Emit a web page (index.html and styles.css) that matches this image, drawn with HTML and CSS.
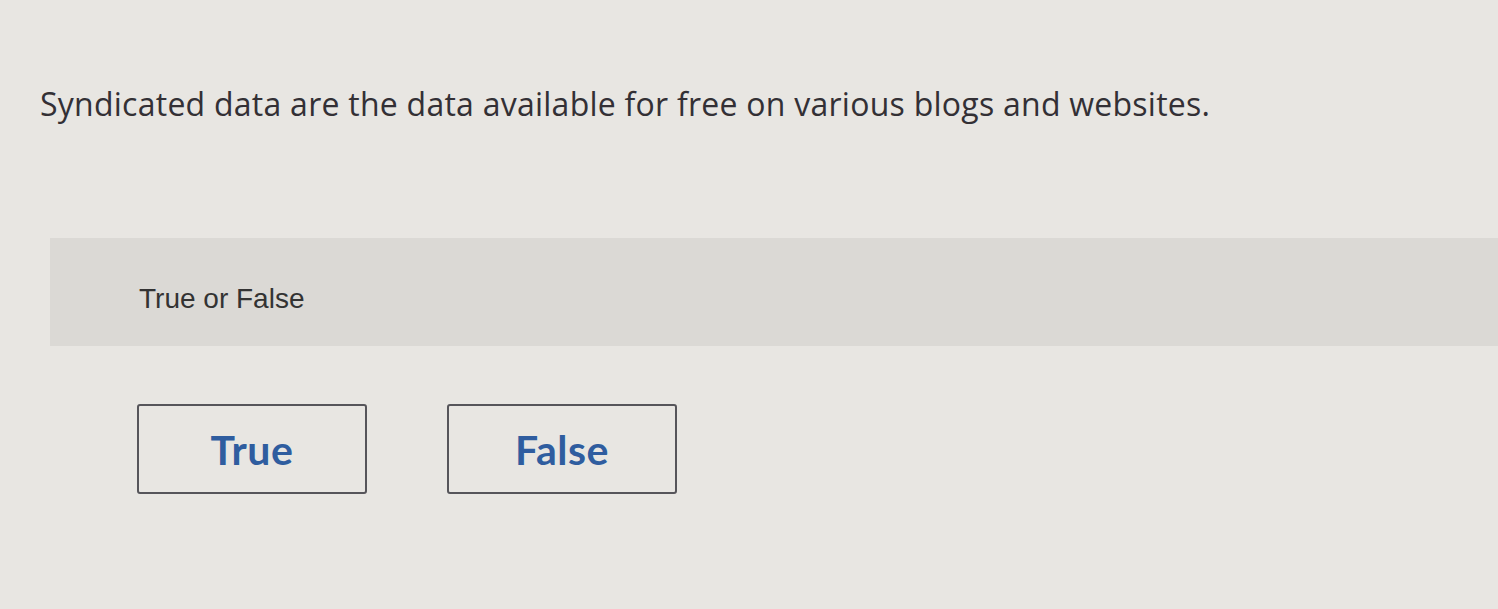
FILE: index.html
```html
<!DOCTYPE html>
<html lang="en">
<head>
  <meta charset="UTF-8">
  <title>True or False</title>
  <link rel="stylesheet" href="styles.css">
</head>
<body>
  <main class="page">
    <p class="prompt">Syndicated data are the data available for free on various blogs and websites.</p>
    <section class="answer">
      <div class="band">True or False</div>
      <div class="choices">
        <button class="choice-btn">True</button>
        <button class="choice-btn">False</button>
      </div>
    </section>
  </main>
</body>
</html>
```

FILE: styles.css
```css
body {
  margin: 0;
  background-color: #e8e6e2;
  font-family: "Open Sans", Lato, sans-serif;
  color: #333035;
}
.page {
  padding-top: 84px;
  min-height: 525px;
}
.prompt {
  margin: 0 0 0 40px;
  font-size: 32px;
  letter-spacing: 0.25px;
  line-height: 40px;
}
.answer {
  margin: 114px 0 0 50px;
}
.band {
  height: 108px;
  box-sizing: border-box;
  padding: 46px 0 0 89px;
  background-color: #dbd9d5;
  font-family: "Liberation Sans", Arial, sans-serif;
  font-size: 28px;
  line-height: 30px;
  color: #333;
}
.choices {
  display: flex;
  gap: 80px;
  padding: 58px 0 0 87px;
}
.choice-btn {
  width: 230px;
  height: 90px;
  background-color: transparent;
  border: 2px solid #56555a;
  border-radius: 3px;
  font-family: Lato, sans-serif;
  font-weight: 700;
  font-size: 41px;
  letter-spacing: 0.5px;
  color: #2f5d9f;
  cursor: pointer;
}
```
